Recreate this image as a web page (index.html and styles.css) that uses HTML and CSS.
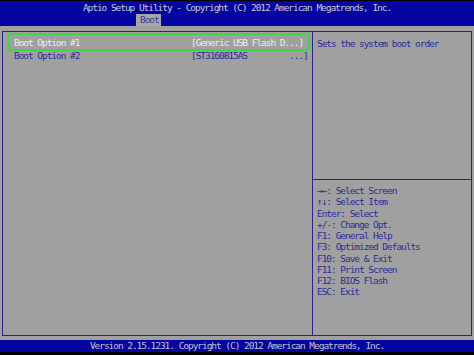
FILE: index.html
```html
<!DOCTYPE html>
<html>
<head>
<meta charset="utf-8">
<link rel="stylesheet" href="styles.css">
</head>
<body>
<div class="screen">
  <header class="top">
    <div class="title">Aptio Setup Utility - Copyright (C) 2012 American Megatrends, Inc.</div>
    <div class="tabs"><span class="tab">Boot</span></div>
  </header>
  <main class="main">
    <div class="box">
      <section class="left">
        <div class="row selected"><span class="label">Boot Option #1</span><span class="value">[Generic USB Flash D...]</span></div>
        <div class="row"><span class="label">Boot Option #2</span><span class="value">[ST3160815AS&nbsp;&nbsp;&nbsp;&nbsp;&nbsp;&nbsp;&nbsp;&nbsp;&nbsp;...]</span></div>
      </section>
      <aside class="right">
        <div class="help">Sets the system boot order</div>
        <div class="keys">
          <div>→←: Select Screen</div>
          <div>↑↓: Select Item</div>
          <div>Enter: Select</div>
          <div>+/-: Change Opt.</div>
          <div>F1: General Help</div>
          <div>F3: Optimized Defaults</div>
          <div>F10: Save &amp; Exit</div>
          <div>F11: Print Screen</div>
          <div>F12: BIOS Flash</div>
          <div>ESC: Exit</div>
        </div>
      </aside>
    </div>
  </main>
  <footer class="bottom">Version 2.15.1231. Copyright (C) 2012 American Megatrends, Inc.</footer>
</div>
</body>
</html>
```

FILE: styles.css
```css
* { box-sizing: border-box; }
html, body { margin: 0; padding: 0; background: #000; }
body {
  font-family: "DejaVu Sans Mono", "Liberation Mono", monospace;
  font-size: 9.5px;
  letter-spacing: -1.05px;
  width: 474px;
  height: 355px;
  overflow: hidden;
}
.screen {
  display: flex;
  flex-direction: column;
  padding-top: 1px;
  height: 355px;
}
.top {
  background: #0505a2;
  height: 25px;
  display: flex;
  flex-direction: column;
  align-items: center;
  color: #c8c8d4;
}
.title {
  height: 13px;
  line-height: 14px;
  text-align: center;
  width: 100%;
}
.tabs {
  width: 100%;
  padding-left: 136px;
  height: 12px;
  display: flex;
  align-items: flex-end;
}
.tab {
  background: #a6a6a6;
  color: #3a3aa0;
  height: 12px;
  line-height: 12px;
  padding: 0 3px 0 4px;
  width: 25px;
}
.main {
  background: #a0a0a0;
  padding: 5px 2px 4px 2px;
  height: 314px;
}
.box {
  border: 1px solid #24248a;
  height: 100%;
  display: grid;
  grid-template-columns: 310px 1fr;
}
.left {
  border-right: 1px solid #24248a;
  padding: 1px 2px 0 4px;
}
.row {
  display: flex;
  height: 11.5px;
  line-height: 11.5px;
  color: #2c2c9a;
  padding-left: 7px;
}
.row.selected {
  height: 18px;
  line-height: 15px;
  border: 2px solid #44d444;
  padding-left: 5px;
  color: #ececf0;
  margin-bottom: -1px;
}
.label { width: 177px; }
.value { white-space: pre; }
.right {
  display: flex;
  flex-direction: column;
  color: #2c2c9a;
}
.help {
  height: 148px;
  border-bottom: 1px solid #24248a;
  padding: 6px 0 0 4px;
  line-height: 12px;
}
.keys {
  padding: 5px 0 0 4px;
  line-height: 11.25px;
}
.bottom {
  background: #0505a2;
  color: #c0c0d0;
  height: 12px;
  line-height: 12px;
  text-align: center;
}
```
